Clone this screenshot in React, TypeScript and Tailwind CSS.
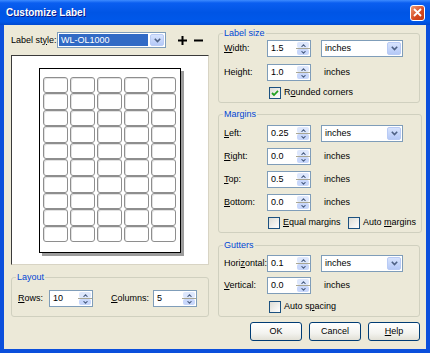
import React from 'react';

type Row = { label: React.ReactNode; value: string; combo?: boolean };

const labelSize: Row[] = [
  { label: <><u>W</u>idth:</>, value: '1.5', combo: true },
  { label: 'Height:', value: '1.0' },
];

const margins: Row[] = [
  { label: <><u>L</u>eft:</>, value: '0.25', combo: true },
  { label: <><u>R</u>ight:</>, value: '0.0' },
  { label: <><u>T</u>op:</>, value: '0.5' },
  { label: <><u>B</u>ottom:</>, value: '0.0' },
];

const gutters: Row[] = [
  { label: <>Hori<u>z</u>ontal:</>, value: '0.1', combo: true },
  { label: <><u>V</u>ertical:</>, value: '0.0' },
];

function Arrow({ up }: { up?: boolean }) {
  return (
    <svg width="5" height="3" viewBox="0 0 5 3">
      <path d={up ? 'M0.5 2.8 L2.5 0.8 L4.5 2.8' : 'M0.5 0.2 L2.5 2.2 L4.5 0.2'} stroke="#4d6185" strokeWidth="1.1" fill="none" />
    </svg>
  );
}

function Spin({ value }: { value: string }) {
  return (
    <div className="flex h-[17px] w-[44px] shrink-0 border border-[#7f9db9] bg-white">
      <span className="flex-1 pl-[3px] leading-[15px]">{value}</span>
      <div className="flex w-[14px] flex-col">
        <div className="m-[1px] mb-0 flex flex-1 items-center justify-center rounded-[2px] bg-[#dde7fc]">
          <Arrow up />
        </div>
        <div className="h-[1px] bg-[#a8a694]" />
        <div className="m-[1px] mt-0 flex flex-1 items-center justify-center rounded-[2px] bg-[#c8d7fb]">
          <Arrow />
        </div>
      </div>
    </div>
  );
}

function DropButton() {
  return (
    <div className="m-[1px] flex w-[14px] items-center justify-center rounded-[2px] border border-[#b9cbf5] bg-[linear-gradient(180deg,#d7e3fd,#b5c9f7)]">
      <svg width="7" height="5" viewBox="0 0 7 5">
        <path d="M0.8 0.8 L3.5 3.6 L6.2 0.8" stroke="#4d6185" strokeWidth="1.6" fill="none" />
      </svg>
    </div>
  );
}

function Combo({ value }: { value: string }) {
  return (
    <div className="ml-[10px] flex h-[17px] w-[82px] border border-[#7f9db9] bg-white">
      <span className="flex-1 pl-[3px] leading-[15px]">{value}</span>
      <DropButton />
    </div>
  );
}

function Check({ checked, children, className = '' }: { checked?: boolean; children: React.ReactNode; className?: string }) {
  return (
    <div className={`flex h-[13px] shrink-0 items-center gap-[3px] whitespace-nowrap ${className}`}>
      <div className="flex h-[12px] w-[12px] shrink-0 items-center justify-center border border-[#1c5180] bg-[linear-gradient(135deg,#dcdcd5,#ffffff)]">
        {checked && (
          <svg width="8" height="8" viewBox="0 0 8 8">
            <path d="M1 4 L3 6 L7 1.8" stroke="#21a121" strokeWidth="1.8" fill="none" />
          </svg>
        )}
      </div>
      <span>{children}</span>
    </div>
  );
}

function UnitRow({ row }: { row: Row }) {
  return (
    <div className="flex h-[17px] items-center">
      <span className="w-[43px]">{row.label}</span>
      <Spin value={row.value} />
      {row.combo ? <Combo value="inches" /> : <span className="ml-[13px]">inches</span>}
    </div>
  );
}

function Group({ title, className = '', children }: { title: string; className?: string; children: React.ReactNode }) {
  return (
    <fieldset className={`rounded-[3px] border border-[#d0d0bf] px-[5px] ${className}`}>
      <legend className="-ml-[1px] px-[1px] leading-[11px] text-[#0046d5]">{title}</legend>
      {children}
    </fieldset>
  );
}

function Button({ children }: { children: React.ReactNode }) {
  return (
    <button className="h-[19px] w-[52px] rounded-[3px] border border-[#003c74] bg-[linear-gradient(180deg,#ffffff_0%,#f3f3ef_60%,#e2e0d6_100%)] leading-[17px]">
      {children}
    </button>
  );
}

export default function App() {
  return (
    <div className="flex h-[353px] w-[430px] flex-col font-['Liberation_Sans',Arial,sans-serif] text-[9px] leading-[11px] text-black">
      {/* title bar */}
      <div className="flex h-[25px] items-center justify-between bg-[linear-gradient(180deg,#3d8bff_0%,#0a5ef0_12%,#0055e5_50%,#0058ea_85%,#0049d0_100%)] pl-[6px] pr-[5px]">
        <span className="text-[10px] font-bold text-white [text-shadow:1px_1px_0_#0a1a8a]">Customize Label</span>
        <div className="flex h-[16px] w-[15px] items-center justify-center rounded-[3px] border border-white bg-[linear-gradient(135deg,#f09a74,#d5481f_60%,#c23c16)]">
          <svg width="9" height="9" viewBox="0 0 9 9">
            <path d="M1 1 L8 8 M8 1 L1 8" stroke="white" strokeWidth="1.8" />
          </svg>
        </div>
      </div>

      <div className="flex flex-1 flex-col border-x-4 border-b-4 border-[#0b4fdc] bg-[#ece9d8] pl-[7px] pr-[6px] pt-[3px]">
        <div className="flex gap-[9px]">
          {/* left column */}
          <div className="flex w-[198px] flex-col">
            <div className="mt-[4px] flex h-[16px] items-center">
              <span className="w-[46px] whitespace-nowrap">Label st<u>y</u>le:</span>
              <div className="flex h-[16px] w-[109px] border border-[#7f9db9] bg-white">
                <span className="m-[1px] flex-1 bg-[#316ac5] pl-[2px] leading-[12px] text-white">WL-OL1000</span>
                <DropButton />
              </div>
              <svg className="ml-[12px]" width="9" height="9" viewBox="0 0 9 9">
                <path d="M4.5 0 V9 M0 4.5 H9" stroke="black" strokeWidth="2" />
              </svg>
              <svg className="ml-[7px]" width="9" height="9" viewBox="0 0 9 9">
                <path d="M0 4.5 H9" stroke="black" strokeWidth="2" />
              </svg>
            </div>

            <div className="mt-[7px] flex h-[210px] items-center justify-center border border-b-[#d8d4c4] border-l-[#3a3a3a] border-r-[#d8d4c4] border-t-[#3a3a3a] bg-white">
              <div className="h-[185px] w-[142px] border border-black bg-white pl-[3px] pt-[8px] shadow-[3px_3px_0_#9c9c9c]">
                <div className="grid grid-cols-[repeat(5,25px)] grid-rows-[repeat(10,16.6px)] gap-x-[2px]">
                  {Array.from({ length: 50 }).map((_, i) => (
                    <div key={i} className="rounded-[3px] border border-[#8e8e8e] shadow-[inset_1px_1px_0_#e2e2e2]" />
                  ))}
                </div>
              </div>
            </div>

            <Group title="Layout" className="mt-[7px] pb-[9px] pt-[7px]">
              <div className="flex h-[17px] items-center">
                <span className="ml-[1px] w-[31px]"><u>R</u>ows:</span>
                <Spin value="10" />
                <span className="ml-[18px] w-[42px]"><u>C</u>olumns:</span>
                <Spin value="5" />
              </div>
            </Group>
          </div>

          {/* right column */}
          <div className="flex w-[202px] flex-col">
            <Group title="Label size" className="pb-[3px] pt-[1px]">
              <div className="flex flex-col gap-[7px]">
                {labelSize.map((r, i) => <UnitRow key={i} row={r} />)}
              </div>
              <Check checked className="ml-[45px] mt-[5px]">R<u>o</u>unded corners</Check>
            </Group>

            <Group title="Margins" className="mt-[6px] pb-[3px] pt-[5px]">
              <div className="flex flex-col gap-[6px]">
                {margins.map((r, i) => <UnitRow key={i} row={r} />)}
              </div>
              <div className="mt-[5px] flex">
                <Check className="ml-[44px] w-[80px]"><u>E</u>qual margins</Check>
                <Check>Auto <u>m</u>argins</Check>
              </div>
            </Group>

            <Group title="Gutters" className="mt-[7px] pb-[3px] pt-[4px]">
              <div className="flex flex-col gap-[5px]">
                {gutters.map((r, i) => <UnitRow key={i} row={r} />)}
              </div>
              <Check className="ml-[45px] mt-[6px]">Auto s<u>p</u>acing</Check>
            </Group>
          </div>
        </div>

        <div className="mt-[5px] flex justify-end gap-[7px]">
          <Button>OK</Button>
          <Button>Cancel</Button>
          <Button><u>H</u>elp</Button>
        </div>
      </div>
    </div>
  );
}
